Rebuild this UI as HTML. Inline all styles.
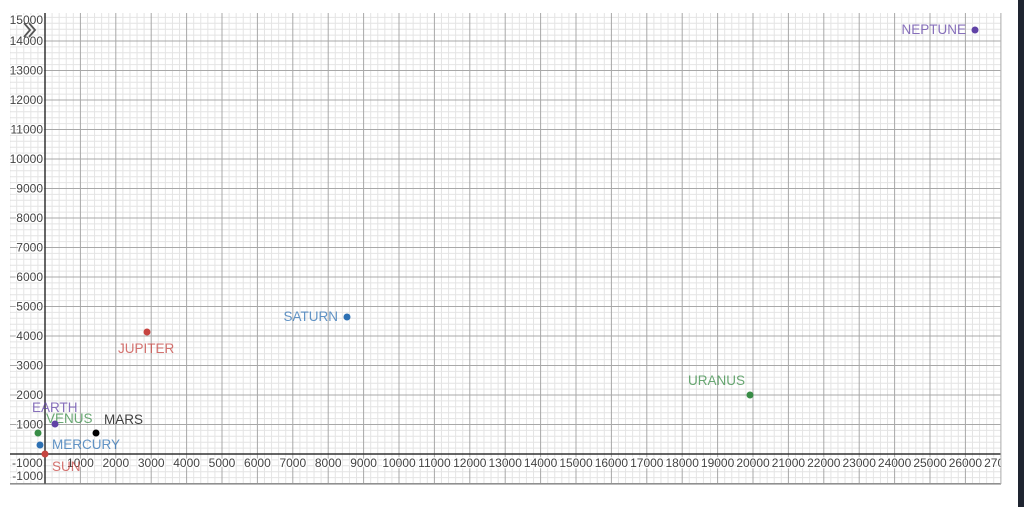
<!DOCTYPE html>
<html><head><meta charset="utf-8"><style>
html,body{margin:0;padding:0;background:#fff;width:1024px;height:507px;overflow:hidden}
svg{position:absolute;left:0;top:0}
text{font-family:"Liberation Sans",sans-serif}
</style></head><body>
<svg width="1024" height="507" viewBox="0 0 1024 507">
<defs><clipPath id="c"><rect x="10" y="13" width="991" height="471"/></clipPath></defs>
<rect x="1018" y="0" width="6" height="507" fill="#1e2430"/>
<g clip-path="url(#c)" id="g"></g>
<line x1="10" y1="484" x2="1001" y2="484" stroke="#777" stroke-width="1"/>
<line x1="1001" y1="13" x2="1001" y2="484" stroke="#bbb" stroke-width="1"/>
<path d="M24 23 L30 30 L24 37 M29 23 L35 30 L29 37" fill="none" stroke="#555" stroke-width="1.8"/>
</svg>
<script>
var g=document.getElementById('g'),s='';
var x0=45,y0=454,dx=35.4,dy=29.5;
for(var i=-10;i<=150;i++){var x=x0+i*dx/5;if(i%5)s+='<line x1="'+x+'" y1="0" x2="'+x+'" y2="507" stroke="#e4e4e4"/>';}
for(var j=-10;j<=90;j++){var y=y0-j*dy/5;if(j%5)s+='<line x1="0" y1="'+y+'" x2="1024" y2="'+y+'" stroke="#e4e4e4"/>';}
for(var i=-2;i<=30;i++){var x=x0+i*dx;if(i)s+='<line x1="'+x+'" y1="0" x2="'+x+'" y2="507" stroke="#a8a8a8"/>';}
for(var j=-2;j<=17;j++){var y=y0-j*dy;if(j)s+='<line x1="0" y1="'+y+'" x2="1024" y2="'+y+'" stroke="#a8a8a8"/>';}
s+='<line x1="'+x0+'" y1="0" x2="'+x0+'" y2="507" stroke="#333" stroke-width="1.5"/>';
s+='<line x1="0" y1="'+y0+'" x2="1024" y2="'+y0+'" stroke="#333" stroke-width="1.5"/>';
function t(x,y,str,anc){return '<text x="'+x+'" y="'+y+'" font-size="12" text-anchor="'+anc+'" fill="#444" stroke="#fff" stroke-width="2.5" paint-order="stroke">'+str+'</text>';}
s+=t(12,467,'-1000','start');
for(var i=1;i<=27;i++){s+=t(x0+i*dx,467,(i*1000),'middle');}
s+=t(x0-2,480,'-1000','end');
for(var j=1;j<=14;j++){s+=t(x0-2,y0-j*dy+4,(j*1000),'end');}
s+=t(x0-2,24,'15000','end');
var P=[[45,454,'#c74440','SUN',52,471,'start'],[40,445,'#2d70b3','MERCURY',52,449,'start'],[38,433,'#388c46','VENUS',46,423,'start'],[55,424,'#6042a6','EARTH',32,412,'start'],[96,433,'#000','MARS',104,424,'start'],[147,332,'#c74440','JUPITER',118,353,'start'],[347,317,'#2d70b3','SATURN',338,321,'end'],[750,395,'#388c46','URANUS',745,385,'end'],[975,30,'#6042a6','NEPTUNE',966,34,'end']];
P.forEach(function(p){s+='<circle cx="'+p[0]+'" cy="'+p[1]+'" r="3.5" fill="'+p[2]+'"/>';s+='<text x="'+p[4]+'" y="'+p[5]+'" font-size="13.5" text-anchor="'+p[6]+'" fill="'+p[2]+'" fill-opacity="0.75">'+p[3]+'</text>';});
g.innerHTML=s;
</script>
</body></html>
